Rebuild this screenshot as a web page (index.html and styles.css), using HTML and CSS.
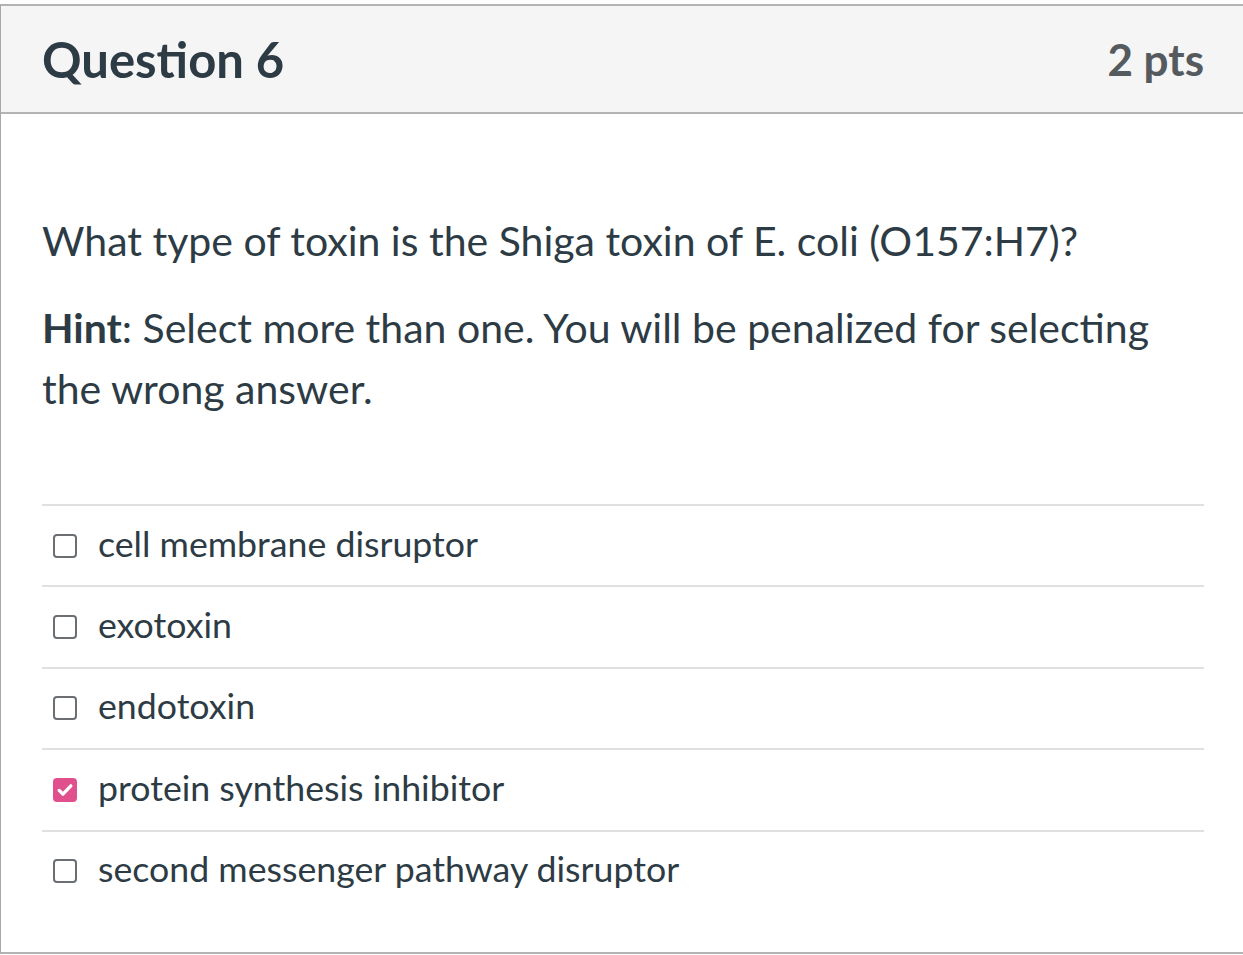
FILE: index.html
```html
<!DOCTYPE html>
<html lang="en">
<head>
<meta charset="utf-8">
<title>Question 6</title>
<link rel="stylesheet" href="styles.css">
</head>
<body>
<div class="card">
  <div class="header">
    <h2 class="title">Question 6</h2>
    <div class="points">2 pts</div>
  </div>
  <div class="content">
    <p class="text">What type of toxin is the Shiga toxin of E. coli (O157:H7)?</p>
    <p class="text"><strong>Hint</strong>: Select more than one. You will be penalized for selecting the wrong answer.</p>
    <div class="answers">
      <div class="answer"><span class="box"></span><span class="label">cell membrane disruptor</span></div>
      <div class="answer"><span class="box"></span><span class="label">exotoxin</span></div>
      <div class="answer"><span class="box"></span><span class="label">endotoxin</span></div>
      <div class="answer"><span class="box checked"><svg viewBox="0 0 24 24" width="20" height="20"><path d="M5 12.5l4.5 4.5L19 7" fill="none" stroke="#fff" stroke-width="4" stroke-linecap="round" stroke-linejoin="round"/></svg></span><span class="label">protein synthesis inhibitor</span></div>
      <div class="answer"><span class="box"></span><span class="label">second messenger pathway disruptor</span></div>
    </div>
  </div>
</div>
</body>
</html>
```
FILE: styles.css
```css
html, body {
  margin: 0;
  padding: 0;
  background: #fff;
  overflow: hidden;
}
body {
  font-family: Lato, "Open Sans", sans-serif;
  color: #2d3b45;
}
.card {
  margin-top: 4px;
  width: 1250px;
  height: 950px;
  box-sizing: border-box;
  border-top: 2px solid #b3b3b3;
  border-left: 1px solid #a8a8a8;
  border-bottom: 2px solid #b3b3b3;
}
.header {
  height: 106px;
  background: #f5f5f5;
  border-bottom: 2px solid #b3b3b3;
  display: flex;
  align-items: center;
  justify-content: space-between;
  padding: 0 46px 0 41px;
}
.title {
  margin: 0;
  font-size: 49px;
  font-weight: 700;
  color: #2d3b45;
}
.points {
  font-size: 44px;
  font-weight: 700;
  color: #555a5e;
}
.content {
  padding: 96px 46px 0 41px;
}
.text {
  margin: 0 0 26px 0;
  font-size: 41px;
  line-height: 61px;
}
.text strong {
  font-weight: 700;
}
.answers {
  margin-top: 85px;
  border-top: 2px solid #e0e0e0;
}
.answer {
  height: 79.4px;
  display: flex;
  align-items: center;
  padding-left: 11px;
  border-bottom: 2px solid #e0e0e0;
}
.answer:last-child {
  border-bottom: none;
}
.box {
  width: 20px;
  height: 20px;
  border: 2px solid #6b6f73;
  border-radius: 4px;
  display: flex;
  align-items: center;
  justify-content: center;
  margin-right: 21px;
  flex: none;
}
.box.checked {
  background: #e0508c;
  border-color: #e0508c;
}
.label {
  font-size: 35.7px;
  margin-top: -5px;
}
```
